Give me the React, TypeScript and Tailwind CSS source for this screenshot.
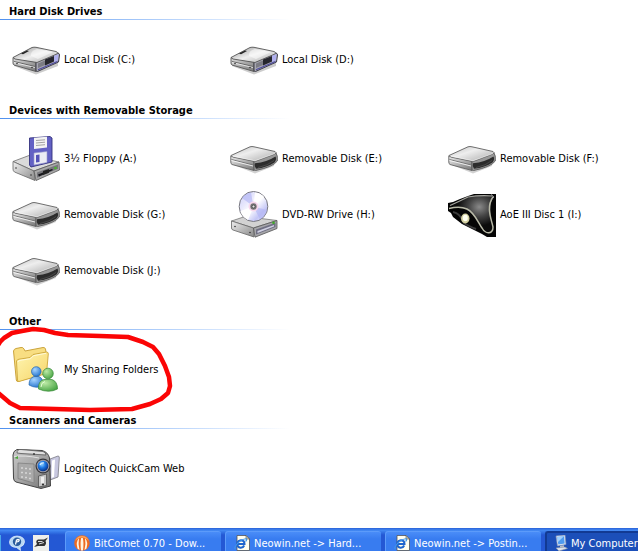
import type { ReactNode } from 'react'

const HardDiskIcon = () => (
  <svg viewBox="0 0 48 48" className="size-12 shrink-0" aria-hidden="true">
    <defs>
      <linearGradient id="hd-top" x1="0" y1="0" x2="1" y2="1">
        <stop offset="0" stopColor="#949494" />
        <stop offset=".5" stopColor="#eeeeee" />
        <stop offset="1" stopColor="#acacac" />
      </linearGradient>
      <linearGradient id="hd-side" x1="0" y1="0" x2="1" y2="1">
        <stop offset="0" stopColor="#dedede" />
        <stop offset="1" stopColor="#787878" />
      </linearGradient>
    </defs>
    <path d="M2 31 L24 39.500 L46 31 L46 28 L2 28Z" fill="#000" opacity=".2" />
    <path d="M1 22.5 L24 27 L24 36.5 L2 30 Q1 29.500 1 28Z" fill="url(#hd-side)" stroke="#555" strokeWidth=".9" />
    <path d="M24 27 L46 18 Q47.500 18.500 47.500 20 L46.500 27 L25.500 36.500 L24 36Z" fill="#a8a8b2" stroke="#3f3f48" strokeWidth="1" />
    <path d="M1 22.500 L20 12.500 Q22 12 24 12.300 L44 16.500 Q47 17.500 45 19 L25 27.500 L3 24Z" fill="url(#hd-top)" stroke="#555" strokeWidth=".9" />
    <path d="M19 21 Q18 16 25 14 L41 17 L26 24Z" fill="#fff" opacity=".5" />
    <path d="M9 18.500 L15 15.500 L17 16 L11 19.200Z" fill="#222" />
    <path d="M2 26.500 L23 31.500" stroke="#666" strokeWidth="1" />
    <path d="M2 27.500 L23 32.500" stroke="#fff" strokeWidth=".7" />
    <path d="M26 28.500 L33 25.500 L33 30 L26 33Z" fill="#7c7c84" />
    <path d="M33 24.500 L42 21 L42 26.500 L33 30.500Z" fill="#26262e" />
    <path d="M42 20.800 L46.500 19 L46 25.500 L42 27Z" fill="#b0b0ee" />
    <path d="M26 34.800 L45.500 26.500" stroke="#4e4ba0" strokeWidth="1.200" />
    <circle cx="5" cy="28.500" r=".8" fill="#333" />
    <circle cx="20" cy="32.500" r=".8" fill="#333" />
  </svg>
)

const RemovableIcon = () => (
  <svg viewBox="0 0 48 48" className="size-12 shrink-0" aria-hidden="true">
    <defs>
      <linearGradient id="rm-top" x1="0" y1="0" x2="1" y2="1">
        <stop offset="0" stopColor="#bcbcbc" />
        <stop offset=".4" stopColor="#eeeeee" />
        <stop offset="1" stopColor="#a8a8a8" />
      </linearGradient>
      <linearGradient id="rm-side" x1="0" y1="0" x2="1" y2="1">
        <stop offset="0" stopColor="#ececec" />
        <stop offset="1" stopColor="#747474" />
      </linearGradient>
    </defs>
    <path d="M4 31 L25 39.500 L44 32 L44 28Z" fill="#000" opacity=".18" />
    <path d="M.8 22 L24 27 L24 36.500 L2 30.500 Q.8 30 .8 28Z" fill="url(#rm-side)" stroke="#626262" strokeWidth=".9" />
    <path d="M24 27 L46 19 Q47.800 21 47.300 27 Q43 33 25.500 36.500 L24 36Z" fill="#989898" stroke="#5a5a5a" strokeWidth=".9" />
    <path d="M1 21.500 L20 12.800 Q22 12.200 24 12.800 L45 17.500 Q47.500 18.800 45 20 L25 27.500 L2.500 23Z" fill="url(#rm-top)" stroke="#606060" strokeWidth=".9" />
    <path d="M3 22.300 L25 26.800 L45 19.500" stroke="#fff" strokeWidth=".8" fill="none" opacity=".7" />
    <path d="M1.500 25.500 L23 31" stroke="#6e6e6e" strokeWidth=".9" />
    <path d="M1.500 26.500 L23 32" stroke="#fff" strokeWidth=".8" />
    <path d="M25 29.300 Q37 28 45.500 22.500 Q47 25.500 44.500 28.500 Q37 33.500 26 34.800 Q24 32 25 29.300Z" fill="#2c2c2c" />
    <path d="M28 33.500 Q38 31.500 44 26.500" stroke="#4c4c4c" strokeWidth=".8" fill="none" />
  </svg>
)

const FloppyIcon = () => (
  <svg viewBox="0 0 48 48" className="size-12 shrink-0" aria-hidden="true">
    <defs>
      <linearGradient id="fl-side" x1="0" y1="0" x2="1" y2="1">
        <stop offset="0" stopColor="#f0f0f0" />
        <stop offset="1" stopColor="#8a8a8a" />
      </linearGradient>
    </defs>
    <path d="M1 27.500 L17 21.500 L47 28 L22 37Z" fill="#dadada" stroke="#707070" strokeWidth=".8" />
    <path d="M1 27.500 L22 37 L23 46.500 L2.500 38 Q1 37 1 35Z" fill="url(#fl-side)" stroke="#666" strokeWidth=".8" />
    <path d="M22 37 L47 28 L47.500 36 L24 46.500Z" fill="#a8a8a8" stroke="#555" strokeWidth=".8" />
    <path d="M17.500 4 L38 2.500 L40 4 L40 28 L19 33 L17.500 31Z" fill="#6361c4" stroke="#34327e" strokeWidth=".9" />
    <path d="M22 3.700 L35 2.800 L35 13.500 L22 15Z" fill="#f4f4f4" />
    <path d="M24 6.500 L33 5.800 M24 9 L33 8.200 M24 11.500 L33 10.700" stroke="#999" strokeWidth=".9" />
    <path d="M22 19 L35 17.500 L35 28.500 L22 31Z" fill="#ececf4" stroke="#9a9acc" strokeWidth=".6" />
    <path d="M24 21 L27.500 20.500 L27.500 28 L24 28.500Z" fill="#5552b8" />
    <path d="M25 38.500 L46 30.500 L46 34.800 L25 43.800Z" fill="#77777c" />
    <path d="M26 40.500 L40 35 L41 36 L27 42.500Z" fill="#16161a" />
    <path d="M31 37 L37 35 L37 38.800 L31 41Z" fill="#222" />
    <circle cx="43.500" cy="34" r="1.300" fill="#49b82c" />
    <circle cx="4" cy="34" r=".8" fill="#333" />
    <circle cx="19" cy="41" r=".8" fill="#333" />
  </svg>
)

const DvdIcon = () => (
  <svg viewBox="0 0 48 48" className="size-12 shrink-0" aria-hidden="true">
    <defs>
      <linearGradient id="dvd-disc" x1="0" y1="0" x2="1" y2="1">
        <stop offset="0" stopColor="#ccd0fa" />
        <stop offset=".3" stopColor="#e6e6fc" />
        <stop offset=".5" stopColor="#ffffff" />
        <stop offset=".75" stopColor="#c4c6f6" />
        <stop offset="1" stopColor="#e8e8ff" />
      </linearGradient>
      <linearGradient id="dvd-side" x1="0" y1="0" x2="1" y2="1">
        <stop offset="0" stopColor="#eee" />
        <stop offset="1" stopColor="#888" />
      </linearGradient>
    </defs>
    <path d="M1.500 31 L15 26.500 L47 30.500 L23.500 38Z" fill="#d2d2d2" stroke="#777" strokeWidth=".8" />
    <path d="M1.500 31 L23.500 38 L24 47 L3 40 Q1.500 39.500 1.500 38Z" fill="url(#dvd-side)" stroke="#666" strokeWidth=".8" />
    <path d="M23.500 38 L47 30.500 L47 38.500 L25 47.200Z" fill="#a6a6aa" stroke="#555" strokeWidth=".8" />
    <ellipse cx="23.500" cy="16.500" rx="14.300" ry="15" fill="url(#dvd-disc)" stroke="#77777f" strokeWidth="1" />
    <path d="M23.500 16.500 L12 8 Q16 3 21 2.500Z M23.500 16.500 L37 20 Q35 27 30 29.500Z" fill="#b2b6f4" opacity=".65" />
    <path d="M23.500 16.500 L25 2.500 Q31 3 34 7Z M23.500 16.500 L18 30 Q12 27 10.500 21Z" fill="#fff" />
    <circle cx="23.500" cy="16.500" r="5" fill="#f7d7ec" />
    <circle cx="23.500" cy="16.500" r="3.200" fill="#777" />
    <circle cx="23.500" cy="16.500" r="1.500" fill="#e4e4e4" stroke="#333" strokeWidth=".7" />
    <path d="M26 39.500 L45.500 32.800 L45.500 37 L26 44.500Z" fill="#6f6f83" />
    <path d="M27.500 41 L44 35 L44 36.500 L27.500 43Z" fill="#d0d0e2" />
    <circle cx="43.500" cy="32.800" r="1.300" fill="#3cab25" />
    <circle cx="5" cy="36.500" r=".8" fill="#333" />
    <circle cx="20" cy="42.500" r=".8" fill="#333" />
  </svg>
)

const HatIcon = () => (
  <svg viewBox="0 0 48 48" className="size-12 shrink-0" aria-hidden="true">
    <defs>
      <radialGradient id="hat" cx=".68" cy=".3" r=".5">
        <stop offset="0" stopColor="#8a8a8a" />
        <stop offset=".5" stopColor="#444" />
        <stop offset="1" stopColor="#0c0c0c" />
      </radialGradient>
    </defs>
    <path d="M0 13 L5 12 L12 9 L20 6 L26 4 H48 V47 H39 L34 44 L26 40 L14 34 L5 27 L3 23 L0 21Z" fill="#050505" />
    <path d="M2 16 L21 7 Q32 5 45 6 Q41 14 43 26 Q46 40 43 43 Q38 45 33 37 Q27 23 17 19Z" fill="url(#hat)" />
    <path d="M2 15.500 Q10 12 20 7 Q32 5 44.500 6" stroke="#a6a6a0" strokeWidth="1.200" fill="none" />
    <path d="M1 18.500 Q12 16 19 19 C26 22 30 32 34 38 C38 45 45 44 45 37 C43 28 38 17 45 7" stroke="#b9baa8" strokeWidth="1.500" fill="none" />
    <path d="M5 22 Q12 23 16 33 Q20 36 28 39" stroke="#3c3c3c" strokeWidth="2" fill="none" />
    <ellipse cx="17.300" cy="28.500" rx="4.200" ry="5" fill="#d3d0a0" />
    <ellipse cx="17.300" cy="28" rx="2.500" ry="3.300" fill="#fffff0" />
    <path d="M43 4.500 L46 7 L43.500 9.500" stroke="#999" strokeWidth="1" fill="none" />
  </svg>
)

const SharingIcon = () => (
  <svg viewBox="0 0 48 48" className="size-12 shrink-0" aria-hidden="true">
    <defs>
      <linearGradient id="folder" x1="0" y1="0" x2="1" y2="1">
        <stop offset="0" stopColor="#fff6b2" />
        <stop offset="1" stopColor="#f6d467" />
      </linearGradient>
      <radialGradient id="buddy-blue" cx=".35" cy=".3" r=".75">
        <stop offset="0" stopColor="#a7d5ff" />
        <stop offset="1" stopColor="#2676d0" />
      </radialGradient>
      <radialGradient id="buddy-green" cx=".35" cy=".3" r=".75">
        <stop offset="0" stopColor="#bdeaa6" />
        <stop offset="1" stopColor="#4aa647" />
      </radialGradient>
    </defs>
    <path d="M1.500 6 Q2 4 4 3.500 L9 2.500 Q11 2 12 4 L13 6 L31 2.500 Q33 2.200 33.500 4 L34 7 V28 L6 36.500 Q4.500 36.500 4.300 35Z" fill="#f8de82" stroke="#c59b2e" strokeWidth=".9" />
    <path d="M4.500 16 Q5 14.500 7 14.200 L18 12.500 L21 9.500 L34.500 7 Q36.500 7 36.300 9 L34.500 28.500 L7 36.500 Q5.500 36.500 5.500 35Z" fill="url(#folder)" stroke="#cda63a" strokeWidth=".9" />
    <path d="M6 17 Q6.200 15.700 8 15.400 L18.500 13.700 L21.500 10.700 L34 8.300" stroke="#fffbe0" strokeWidth=".9" fill="none" />
    <path d="M17 40 Q17 33 22 31.500 L27 31.500 Q32 34 31 41 Q24 44 17 40Z" fill="url(#buddy-blue)" stroke="#2465ae" strokeWidth=".7" />
    <circle cx="24.300" cy="26.500" r="4.800" fill="url(#buddy-blue)" stroke="#2465ae" strokeWidth=".7" />
    <path d="M26.500 44 Q26 36 32 34.500 L40 34.500 Q45.500 36.500 45.500 44 Q37 48.500 26.500 44Z" fill="url(#buddy-green)" stroke="#388a37" strokeWidth=".7" />
    <circle cx="36" cy="28.500" r="5.300" fill="url(#buddy-green)" stroke="#388a37" strokeWidth=".7" />
    <path d="M29 42 Q29 37.500 33 36.500" stroke="#e6ffd8" strokeWidth="1" fill="none" />
  </svg>
)

const CameraIcon = () => (
  <svg viewBox="0 0 48 48" className="size-12 shrink-0" aria-hidden="true">
    <defs>
      <linearGradient id="cam" x1="0" y1="0" x2="1" y2="1">
        <stop offset="0" stopColor="#c8c8c8" />
        <stop offset=".5" stopColor="#a5a5a5" />
        <stop offset="1" stopColor="#6e6e6e" />
      </linearGradient>
      <radialGradient id="lens" cx=".4" cy=".35" r=".65">
        <stop offset="0" stopColor="#8fd0ff" />
        <stop offset=".5" stopColor="#1c77e2" />
        <stop offset="1" stopColor="#07328a" />
      </radialGradient>
    </defs>
    <path d="M38 15 L46 12 Q47.500 12 47.300 14 L46 33 L38 36Z" fill="#c8c8e0" stroke="#85858f" strokeWidth=".9" />
    <path d="M40 16.500 L43 15.500 L42 33 L39.500 34Z" fill="#fff" />
    <path d="M1 11 Q1 7 5 5.500 L30 6.500 Q36 8 37.500 14 L38.500 42 L29 44.500 L4 38 Q1.500 37 1.500 34Z" fill="url(#cam)" stroke="#444" strokeWidth="1" />
    <path d="M5 9 Q5 5 9 5.500 L31 7.500 Q34 8.500 34 11 L9 9.500Z" fill="#dfdfdf" stroke="#555" strokeWidth=".8" />
    <circle cx="22" cy="10" r=".9" fill="#333" />
    <path d="M2 12.500 Q13 11 27 14" stroke="#eee" strokeWidth=".8" fill="none" />
    <path d="M2.500 14 L6 12 L6 15Z" fill="#4aa83a" />
    <path d="M6 19 L22 20 L22 39 L6 34.500Z" fill="#a9a9a9" stroke="#808080" strokeWidth=".8" />
    <path d="M9 24 h2 M13 24.500 h2 M17 25 h2 M9 28.500 h2 M13 29 h2 M17 29.500 h2 M9 33 h2 M13 33.500 h2 M17 34.500 h2" stroke="#d6d6d6" strokeWidth="1.500" />
    <circle cx="31" cy="22" r="7.500" fill="#38383c" />
    <circle cx="31" cy="22" r="6.300" fill="#9c9ca8" />
    <circle cx="31" cy="22" r="5.300" fill="url(#lens)" />
    <path d="M28 21 Q29 18.500 32 19" stroke="#d8f0ff" strokeWidth="1.200" fill="none" />
    <path d="M26.500 32 L34.500 30 L34.500 41.500 L26.500 43Z" fill="#c5c5c5" stroke="#505050" strokeWidth=".8" />
    <path d="M29 33 L32 32.500 V39 L29 39.500Z" fill="#eee" />
    <circle cx="31" cy="40.500" r="1" fill="#222" />
  </svg>
)

const BitCometIcon = () => (
  <svg viewBox="0 0 16 16" className="size-4 shrink-0" aria-hidden="true">
    <circle cx="8" cy="8" r="7.800" fill="#ee6a20" />
    <path d="M3.500 13.500 Q1.500 7 5 3 Q4 8 5.500 15Z M7 15.500 Q6 7 7.200 3 H8.800 Q10 7 9 15.500Z M12.500 13.500 Q14.500 7 11 3 Q12 8 10.500 15Z" fill="#fff3df" />
    <path d="M1 6 Q3 1 8 1 Q13 1 15 6 Q12 2.500 8 2.500 Q4 2.500 1 6Z" fill="#f9a45c" />
  </svg>
)

const ExplorerIcon = () => (
  <svg viewBox="0 0 16 16" className="size-4 shrink-0" aria-hidden="true">
    <path d="M3 .5 H12 L15.500 4 V15.500 H3Z" fill="#fffef0" stroke="#555" strokeWidth=".8" />
    <path d="M12 .5 V4 H15.500Z" fill="#c9c9bb" stroke="#555" strokeWidth=".6" />
    <path d="M10.200 10.500 Q9 13 6.500 12.800 Q3.300 12.300 3.300 9 Q3.500 5.500 7 5.300 Q10.500 5.500 10.500 9 H4" fill="none" stroke="#1c63cd" strokeWidth="2" />
    <path d="M1.500 14 Q-.5 13 3.500 8.500 Q8 4 12 3.800 Q13.500 4.500 11.500 6.500" fill="none" stroke="#3d95ee" strokeWidth="1.100" />
  </svg>
)

const ComputerIcon = () => (
  <svg viewBox="0 0 16 16" className="size-4 shrink-0" aria-hidden="true">
    <path d="M3 1 L12 0 L13 9.500 L4.500 11Z" fill="#e8edf5" stroke="#7d91b8" strokeWidth=".7" />
    <path d="M4.200 2 L11 1.300 L11.700 8.500 L5.300 9.500Z" fill="#4f9bf0" />
    <path d="M4.200 2 L11 1.300 L5 7Z" fill="#9fd0ff" />
    <path d="M7 11 L11 10.300 V12.500 L7 13Z" fill="#b9c0cc" />
    <path d="M3 13 L12 12 L14.500 13.500 L6 16Z" fill="#dfe4ec" stroke="#8a93a8" strokeWidth=".6" />
  </svg>
)

type Item = { label: string; icon: ReactNode }

const sections: { title: string; items: Item[]; circled?: boolean }[] = [
  {
    title: 'Hard Disk Drives',
    items: [
      { label: 'Local Disk (C:)', icon: <HardDiskIcon /> },
      { label: 'Local Disk (D:)', icon: <HardDiskIcon /> },
    ],
  },
  {
    title: 'Devices with Removable Storage',
    items: [
      { label: '3½ Floppy (A:)', icon: <FloppyIcon /> },
      { label: 'Removable Disk (E:)', icon: <RemovableIcon /> },
      { label: 'Removable Disk (F:)', icon: <RemovableIcon /> },
      { label: 'Removable Disk (G:)', icon: <RemovableIcon /> },
      { label: 'DVD-RW Drive (H:)', icon: <DvdIcon /> },
      { label: 'AoE III Disc 1 (I:)', icon: <HatIcon /> },
      { label: 'Removable Disk (J:)', icon: <RemovableIcon /> },
    ],
  },
  {
    title: 'Other',
    circled: true,
    items: [{ label: 'My Sharing Folders', icon: <SharingIcon /> }],
  },
  {
    title: 'Scanners and Cameras',
    items: [{ label: 'Logitech QuickCam Web', icon: <CameraIcon /> }],
  },
]

const tasks = [
  { label: 'BitComet 0.70 - Dow...', icon: <BitCometIcon /> },
  { label: 'Neowin.net -> Hard...', icon: <ExplorerIcon /> },
  { label: 'Neowin.net -> Postin...', icon: <ExplorerIcon /> },
  { label: 'My Computer', icon: <ComputerIcon />, active: true },
]

const RedCircle = () => (
  <svg
    viewBox="0 2 180 103"
    className="pointer-events-none absolute left-0 top-0 h-[103px] w-[180px]"
    aria-hidden="true"
  >
    <path
      d="M-3 34 L0 29 L4 25 L12 20 L22 18 L33 16 L44 17 L55 20 L68 22 L100 23 L128 24 L143 29 L153 34 L159 41 L165 53 L169 64 L170 73 L168 80 L161 86 L150 91 L132 96 L90 97 L55 96 L20 95 L10 90 L3 84 L-3 79"
      fill="none"
      stroke="#fb0505"
      strokeWidth="4.500"
      strokeLinejoin="round"
    />
  </svg>
)

const Taskbar = () => (
  <footer className="flex h-[23px] overflow-hidden bg-linear-to-b from-[#2a61d8] via-[#4288f3] via-10% to-[#2458d4] to-30% text-white">
    <div className="flex w-[65px] shrink-0 gap-2 pt-[7px]">
      <button type="button" aria-label="Messenger" className="w-px bg-[#49a8ea]" />
      <button type="button" aria-label="Chat">
        <svg viewBox="0 0 16 16" className="size-4">
          <path d="M8 1 Q15.500 1.500 15.500 7 Q15 11 11 12 L11.500 15.500 L7.500 12.500 Q.5 12 .5 7 Q1 1.500 8 1Z" fill="#b9d8f4" stroke="#e8f4ff" strokeWidth=".7" />
          <circle cx="8" cy="6.800" r="4.200" fill="#285a9c" />
          <path d="M6.500 9.500 L7.500 5 M7.300 5.500 Q9 3.800 10.300 5 Q10 7 7.500 7" stroke="#fff" strokeWidth="1.200" fill="none" />
        </svg>
      </button>
      <button type="button" aria-label="Launcher">
        <svg viewBox="0 0 16 16" className="size-4">
          <path d="M0 0 H16 V16 H0Z" fill="#efefeb" />
          <path d="M1 12 L4 9 Q2 6 5 4.500 H11 L15 2.500 L12.500 6 Q14 8.500 11.500 11 H5Z" fill="#333" />
          <path d="M5 6.500 H9.500 M6 9 L11 7.500" stroke="#ddd" strokeWidth="1" />
        </svg>
      </button>
    </div>
    <nav aria-label="Open windows" className="flex min-w-0 flex-1 gap-1 pt-[3px]">
      {tasks.map(({ label, icon, active }) => (
        <button
          key={label}
          type="button"
          aria-pressed={!!active}
          className={
            active
              ? 'flex h-6 min-w-0 flex-1 gap-0.5 rounded-tl-[3px] border-l-2 border-t-2 border-[#123a93] bg-[#1c4fb9] pl-1.5 pt-0.5 leading-[18px]'
              : 'flex h-6 w-[156px] shrink-0 gap-1 rounded-t-[3px] border-l border-t border-[#5c9bfa] bg-linear-to-b from-[#4a8df8] to-[#387cf0] to-30% pl-2 pt-[3px] leading-[18px]'
          }
        >
          {icon}
          <span className="whitespace-nowrap">{label}</span>
        </button>
      ))}
    </nav>
  </footer>
)

export default function App() {
  return (
    <div className="flex min-h-screen flex-col justify-between overflow-x-hidden bg-white font-['Tahoma','DejaVu_Sans_Condensed','DejaVu_Sans',sans-serif] text-[11px] text-black">
      <main className="flex flex-col gap-[17px] pt-[5px]">
        {sections.map(({ title, items, circled }) => (
          <section key={title} className="relative">
            <h2 className="pl-[9px] font-bold leading-[14px]">{title}</h2>
            <div className="h-px w-[290px] bg-linear-to-r from-[#5091ee] to-white" />
            <ul className="grid grid-cols-[218px_218px_1fr] pl-3 pt-[11px]">
              {items.map(({ label, icon }) => (
                <li key={label}>
                  <button type="button" className="flex h-14 items-center gap-1">
                    {icon}
                    <span className="whitespace-nowrap pt-0.5">{label}</span>
                  </button>
                </li>
              ))}
            </ul>
            {circled && <RedCircle />}
          </section>
        ))}
      </main>
      <Taskbar />
    </div>
  )
}
